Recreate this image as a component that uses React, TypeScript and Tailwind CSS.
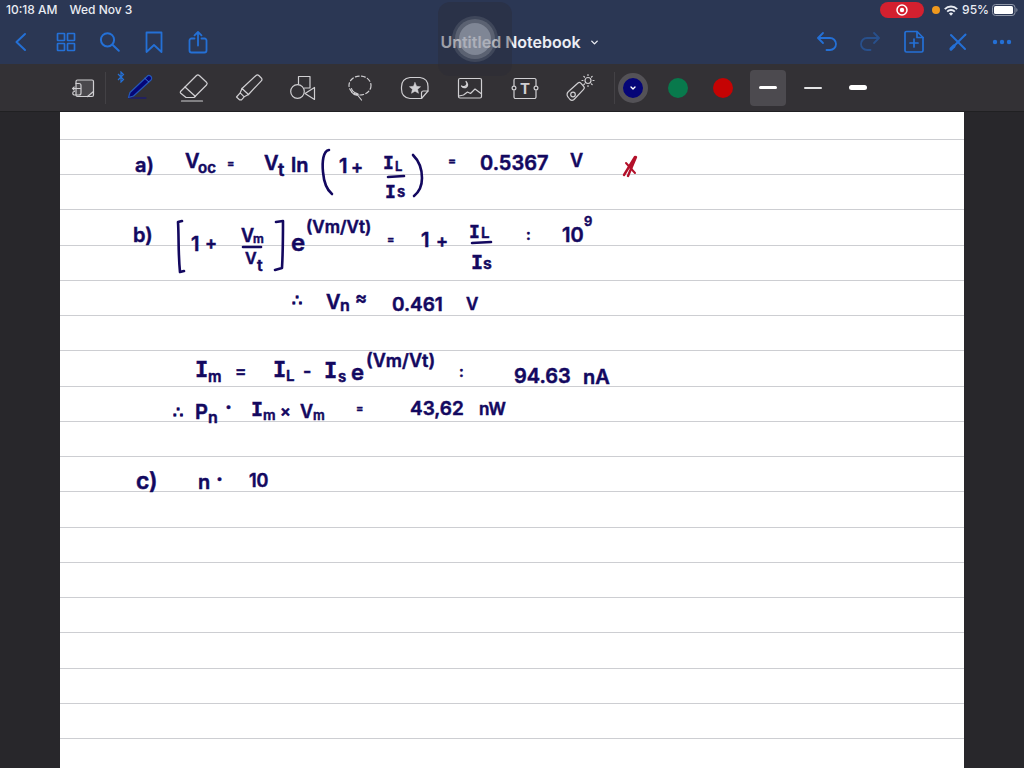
import React from 'react';
import { ChevronDown } from 'lucide-react';

interface IconButtonProps {
  label: string;
  className?: string;
  children: React.ReactNode;
}

const IconButton: React.FC<IconButtonProps> = ({ label, className = 'w-11 h-11', children }) => (
  <button type="button" aria-label={label} className={`flex shrink-0 items-center justify-center ${className}`}>
    {children}
  </button>
);

interface IconProps {
  size?: number;
  width?: number;
  className?: string;
  children: React.ReactNode;
}

const Icon: React.FC<IconProps> = ({ size = 24, width = 1.7, className, children }) => (
  <svg
    width={size}
    height={size}
    viewBox={`0 0 ${size} ${size}`}
    fill="none"
    stroke="currentColor"
    strokeWidth={width}
    strokeLinecap="round"
    strokeLinejoin="round"
    className={className}
  >
    {children}
  </svg>
);

const StatusBar: React.FC = () => (
  <div className="flex h-5 items-center justify-between px-[6px] text-xs font-medium text-[#e9ecf3]">
    <div className="flex gap-3">
      <span>10:18 AM</span>
      <span>Wed Nov 3</span>
    </div>
    <div className="flex items-center">
      <span className="mr-2 flex h-4 w-11 items-center justify-center rounded-full bg-[#d3202f] text-white">
        <svg width="12" height="12" viewBox="0 0 12 12" fill="none" stroke="currentColor" strokeWidth="1.5">
          <circle cx="6" cy="6" r="5" />
          <circle cx="6" cy="6" r="2.2" fill="currentColor" stroke="none" />
        </svg>
      </span>
      <span className="mr-1 h-2 w-2 rounded-full bg-[#f0991e]" />
      <svg width="14" height="11" viewBox="0 0 14 11" fill="none" stroke="currentColor" strokeWidth="1.9" className="mr-1">
        <path d="M.8 4.1a8.8 8.8 0 0 1 12.4 0" />
        <path d="M3.2 6.6a5.4 5.4 0 0 1 7.6 0" />
        <path d="M7 10.8 4.9 8.6a3 3 0 0 1 4.2 0z" fill="currentColor" stroke="none" />
      </svg>
      <span className="mr-[3px]">95%</span>
      <svg width="26" height="12" viewBox="0 0 26 12" fill="none">
        <rect x=".5" y=".5" width="22.5" height="11" rx="3" stroke="#8f97a8" />
        <rect x="2" y="2" width="19" height="8" rx="1.6" fill="#fff" />
        <path d="M24.4 4v4c1.4-.6 1.4-3.4 0-4z" fill="#8f97a8" />
      </svg>
    </div>
  </div>
);

const NavBar: React.FC = () => (
  <nav className="flex h-11 items-center text-[#2470d6]">
    <IconButton label="Back">
      <Icon width={2}><path d="M15 4 6.500 12l8.500 8" /></Icon>
    </IconButton>
    <IconButton label="Thumbnails">
      <Icon>
        <rect x="3.500" y="3.500" width="7" height="7" rx=".5" />
        <rect x="13.500" y="3.500" width="7" height="7" rx=".5" />
        <rect x="3.500" y="13.500" width="7" height="7" rx=".5" />
        <rect x="13.500" y="13.500" width="7" height="7" rx=".5" />
      </Icon>
    </IconButton>
    <IconButton label="Search">
      <Icon width={2}>
        <circle cx="9.500" cy="9.800" r="6.600" />
        <path d="m14.500 14.800 6.300 6" />
      </Icon>
    </IconButton>
    <IconButton label="Bookmark">
      <Icon width={1.8}><path d="M4.500 2.500h15v19.500L12 15l-7.500 7z" /></Icon>
    </IconButton>
    <IconButton label="Share">
      <Icon width={1.8}>
        <path d="M8.500 8.500h-3a2 2 0 0 0-2 2v10a2 2 0 0 0 2 2h13a2 2 0 0 0 2-2v-10a2 2 0 0 0-2-2h-3" />
        <path d="M12 15.500V2M8.500 5.300 12 2l3.500 3.300" />
      </Icon>
    </IconButton>
    <div className="flex flex-1 justify-center pl-4">
      <button type="button" className="flex items-center gap-2 text-base font-semibold text-[#eceef4]">
        Untitled Notebook
        <ChevronDown size={11} strokeWidth={3} />
      </button>
    </div>
    <IconButton label="Undo">
      <Icon width={1.8}>
        <path d="M9 3 4 8l5 5" />
        <path d="M4.500 8H16a5.500 5.500 0 0 1 0 12h-3.500" />
      </Icon>
    </IconButton>
    <IconButton label="Redo">
      <Icon width={1.8} className="text-[#28508c]">
        <path d="m16 3 5 5-5 5" />
        <path d="M20.500 8H9a5.500 5.500 0 0 0 0 12h3.500" />
      </Icon>
    </IconButton>
    <IconButton label="Add page">
      <Icon width={1.7}>
        <path d="M4.500 1.500H15l6 6v13a1.500 1.500 0 0 1-1.500 1.500h-15A1.500 1.500 0 0 1 3 20.500V3a1.500 1.500 0 0 1 1.500-1.500z" />
        <path d="M15 1.500v6h6M12 9v8M8 13h8" />
      </Icon>
    </IconButton>
    <IconButton label="Read-only mode">
      <Icon width={2}>
        <path d="m5 5 14 14" />
        <path d="M19.500 4.500 8 16" />
        <path d="M8 16 5 19" strokeWidth="3.200" />
      </Icon>
    </IconButton>
    <IconButton label="More">
      <Icon>
        <g fill="currentColor" stroke="none">
          <circle cx="5" cy="12" r="2.200" />
          <circle cx="12" cy="12" r="2.200" />
          <circle cx="19" cy="12" r="2.200" />
        </g>
      </Icon>
    </IconButton>
  </nav>
);

const tools = [
  {
    label: 'Pen',
    icon: (
      <>
        <path d="M6 26h17" stroke="#12128a" strokeWidth="1" />
        <path d="m5.500 25.500 1.500-5L24 4.500a2.400 2.400 0 0 1 4 3.500L10.500 24z" fill="#050577" stroke="#2456b8" strokeWidth="1.200" />
        <path d="m22 6.500 3.800 3.500" stroke="#3b78d8" strokeWidth="1" />
      </>
    ),
  },
  {
    label: 'Eraser',
    icon: (
      <>
        <path d="M2.500 19.500 18.500 3.500a2 2 0 0 1 2.800 0l7.200 6.700a2 2 0 0 1 0 2.800L16 25.500H8l-5.500-4.500a1.500 1.500 0 0 1 0-1.500z" />
        <path d="m7 15 10.500 9.500M3.500 29h21" />
      </>
    ),
  },
  {
    label: 'Highlighter',
    icon: (
      <>
        <path d="m9 16.500 14-13a2 2 0 0 1 2.800 0l2.500 2.500a2 2 0 0 1 0 2.800L15.500 22.500" />
        <path d="m9 16.500-1.800 4.300 4 4 4.300-2.300zM7.200 20.800 3.500 25l3 2.800h2l2.700-3M9 16.500l6.500 6" />
      </>
    ),
  },
  {
    label: 'Shapes',
    icon: (
      <>
        <path d="M10.500 12V4.500H22V16h-5.500" />
        <circle cx="9.500" cy="19.500" r="6.800" />
        <path d="m17 21.500 9.500-6v12z" />
      </>
    ),
  },
  {
    label: 'Lasso',
    icon: (
      <>
        <ellipse cx="17" cy="13.500" rx="11" ry="9.500" strokeDasharray="3.800 2.400" />
        <path d="M8.500 16.500c1 5.500 8 4.500 6.500 6.500-2 .5-5-1-6.500-3M14.500 23l4 5" />
      </>
    ),
  },
  {
    label: 'Elements',
    icon: (
      <>
        <path d="M12 5.500h10q8 1 8 9v4.500l-6.500 7.500H12q-8.500-1-8.500-9.500v-2Q3.500 6.500 12 5.500z" />
        <path d="M23.500 26.500v-5.500q0-2 2-2H30" />
        <path d="m17 10.500 1.600 3.800 4 .4-3 2.600.9 4-3.500-2.100-3.500 2.100.9-4-3-2.600 4-.4z" fill="currentColor" strokeWidth=".5" />
      </>
    ),
  },
  {
    label: 'Image',
    icon: (
      <>
        <rect x="5.500" y="6.500" width="23" height="19.500" rx="1.500" />
        <path d="m6 24 4.500-1 4-3 3 1.500 4.500-4.500 6 4.500" />
        <path d="M13 9.500c2.500 3.500-1 6.500-4.500 4.500 3 3.500 9 .5 4.500-4.500z" />
      </>
    ),
  },
  {
    label: 'Text',
    icon: (
      <>
        <path d="M6 13.500V8a1.500 1.500 0 0 1 1.500-1.500h19A1.500 1.500 0 0 1 28 8v5.500M28 18.500v6.500a1.500 1.500 0 0 1-1.500 1.500h-19A1.500 1.500 0 0 1 6 25v-6.500" />
        <circle cx="6" cy="16" r="1.900" />
        <circle cx="28" cy="16" r="1.900" />
        <text x="17" y="21.500" textAnchor="middle" fill="currentColor" stroke="none" fontSize="15" fontWeight="700">T</text>
      </>
    ),
  },
  {
    label: 'Laser pointer',
    icon: (
      <>
        <path d="M5.500 19.500 15 11a2 2 0 0 1 2.800.2l3 3.300a2 2 0 0 1-.2 2.800L11 27.500a3 3 0 0 1-4 0l-2-2.500a3.800 3.800 0 0 1 .5-5.500z" />
        <circle cx="10" cy="22.500" r="2.300" />
        <circle cx="25" cy="8.500" r="3" />
        <path d="M25 2.500v1M25 13.500v1M19 8.500h1M30 8.500h1M20.800 4.300l.7.700M28.500 12l.7.700M29.200 4.300l-.7.700M21.500 12l-.7.700" />
      </>
    ),
  },
];

const Toolbar: React.FC = () => (
  <div className="flex h-12 items-center border-b border-[#202022] bg-[#333135] pl-[61px] text-[#d0cfd2]">
    <IconButton label="Zoom window" className="h-11 w-11 pt-px">
      <Icon width={1.2}>
        <rect x="5" y="4" width="17.500" height="16.500" rx="1.500" fill="#4a484c" />
        <path d="M5 7.500h3a2 2 0 0 1 2 2v7.500a2 2 0 0 1-2 2H3M1.500 12.500h8M3.500 11a1.500 1.500 0 1 0 0 3M3.500 15.500a1.500 1.500 0 1 0 0 3.500M16.500 20.500l6-5" />
      </Icon>
    </IconButton>
    <span className="mr-[6px] h-8 w-px bg-[#434145]" />
    {tools.map((tool) => (
      <IconButton key={tool.label} label={tool.label} className="relative h-11 w-[55px] pt-[2px]">
        <Icon size={34} width={1.2}>{tool.icon}</Icon>
        {tool.label === 'Pen' && (
          <svg width="8" height="12" viewBox="0 0 8 12" fill="none" stroke="#2470d6" strokeWidth="1.200" className="absolute left-[5px] top-[5px]">
            <path d="m1 3 5.500 5.500L4 11V1l2.500 2.500L1 9" />
          </svg>
        )}
      </IconButton>
    ))}
    <span className="ml-[7px] h-8 w-px bg-[#434145]" />
    <div className="flex items-center gap-[9px]">
      <IconButton label="Navy ink" className="size-9">
        <span className="flex size-[30px] items-center justify-center rounded-full border-[5px] border-[#545257] bg-[#050577] text-white">
          <ChevronDown size={8} strokeWidth={4} />
        </span>
      </IconButton>
      <IconButton label="Green ink" className="size-9">
        <span className="size-5 rounded-full bg-[#08794c]" />
      </IconButton>
      <IconButton label="Red ink" className="size-9">
        <span className="size-5 rounded-full bg-[#c50303]" />
      </IconButton>
      <IconButton label="Medium stroke" className="size-9 rounded bg-[#4c4a4f]">
        <span className="h-[3px] w-[18px] rounded-full bg-white" />
      </IconButton>
      <IconButton label="Thin stroke" className="size-9">
        <span className="h-[2px] w-[18px] rounded-full bg-[#e4e4e6]" />
      </IconButton>
      <IconButton label="Thick stroke" className="size-9">
        <span className="h-[5px] w-[18px] rounded-full bg-white" />
      </IconButton>
    </div>
  </div>
);

// Floating assistive-touch puck.
const TouchPuck: React.FC = () => (
  <div className="pointer-events-none absolute left-[438px] top-[2px] flex size-[74px] items-center justify-center rounded-xl bg-[#2b2b36]/40">
    <span className="flex size-[46px] items-center justify-center rounded-full bg-white/10">
      <span className="flex size-10 items-center justify-center rounded-full bg-white/15">
        <span className="size-8 rounded-full bg-[#a4a9b8]/50" />
      </span>
    </span>
  </div>
);

// x and y are the left end of the baseline on the sheet.
interface Ink {
  t: string;
  x: number;
  y: number;
  s: number;
  serif?: boolean;
}

const ink: Ink[] = [
  { t: 'a)', x: 75, y: 60, s: 20 },
  { t: 'V', x: 125, y: 56, s: 20 },
  { t: 'oc', x: 138, y: 61, s: 15 },
  { t: '=', x: 167, y: 55, s: 11 },
  { t: 'V', x: 204, y: 58, s: 20 },
  { t: 't', x: 218, y: 64, s: 18 },
  { t: 'ln', x: 231, y: 60, s: 20 },
  { t: '1', x: 279, y: 61, s: 20 },
  { t: '+', x: 291, y: 61, s: 18 },
  { t: 'I', x: 323, y: 57, s: 18, serif: true },
  { t: 'L', x: 335, y: 59, s: 13 },
  { t: 'I', x: 325, y: 86, s: 18, serif: true },
  { t: 's', x: 337, y: 85, s: 15 },
  { t: '=', x: 388, y: 53, s: 12 },
  { t: '0.5367', x: 420, y: 58, s: 20 },
  { t: 'V', x: 510, y: 55, s: 18 },
  { t: 'b)', x: 73, y: 130, s: 20 },
  { t: '1', x: 131, y: 139, s: 20 },
  { t: '+', x: 145, y: 137, s: 18 },
  { t: 'V', x: 181, y: 130, s: 18 },
  { t: 'm', x: 193, y: 131, s: 12 },
  { t: 'V', x: 185, y: 152, s: 16 },
  { t: 't', x: 197, y: 159, s: 16 },
  { t: 'e', x: 231, y: 139, s: 24 },
  { t: '(Vm/Vt)', x: 246, y: 121, s: 17 },
  { t: '=', x: 327, y: 131, s: 11 },
  { t: '1', x: 361, y: 135, s: 20 },
  { t: '+', x: 376, y: 135, s: 18 },
  { t: 'I', x: 409, y: 126, s: 18, serif: true },
  { t: 'L', x: 421, y: 126, s: 15 },
  { t: 'I', x: 411, y: 157, s: 20, serif: true },
  { t: 's', x: 423, y: 157, s: 16 },
  { t: ':', x: 466, y: 128, s: 15 },
  { t: '10', x: 502, y: 130, s: 20 },
  { t: '9', x: 524, y: 114, s: 13 },
  { t: '∴', x: 232, y: 194, s: 16 },
  { t: 'V', x: 266, y: 197, s: 20 },
  { t: 'n', x: 280, y: 199, s: 16 },
  { t: '≈', x: 295, y: 192, s: 18 },
  { t: '0.461', x: 332, y: 199, s: 19 },
  { t: 'V', x: 406, y: 198, s: 17 },
  { t: 'I', x: 135, y: 265, s: 22, serif: true },
  { t: 'm', x: 148, y: 270, s: 15 },
  { t: '=', x: 175, y: 265, s: 17 },
  { t: 'I', x: 213, y: 265, s: 22, serif: true },
  { t: 'L', x: 226, y: 269, s: 15 },
  { t: '-', x: 243, y: 265, s: 18 },
  { t: 'I', x: 264, y: 266, s: 22, serif: true },
  { t: 's', x: 278, y: 270, s: 15 },
  { t: 'e', x: 291, y: 268, s: 22 },
  { t: '(Vm/Vt)', x: 306, y: 255, s: 18 },
  { t: ':', x: 399, y: 265, s: 15 },
  { t: '94.63', x: 454, y: 271, s: 20 },
  { t: 'nA', x: 523, y: 272, s: 20 },
  { t: '∴', x: 113, y: 306, s: 16 },
  { t: 'P', x: 135, y: 307, s: 20 },
  { t: 'n', x: 148, y: 311, s: 16 },
  { t: '·', x: 165, y: 303, s: 22 },
  { t: 'I', x: 191, y: 304, s: 20, serif: true },
  { t: 'm', x: 203, y: 308, s: 14 },
  { t: '×', x: 220, y: 305, s: 16 },
  { t: 'V', x: 240, y: 306, s: 18 },
  { t: 'm', x: 253, y: 308, s: 13 },
  { t: '=', x: 296, y: 300, s: 11 },
  { t: '43,62', x: 350, y: 303, s: 19 },
  { t: 'nW', x: 419, y: 303, s: 17 },
  { t: 'c)', x: 76, y: 377, s: 23 },
  { t: 'n', x: 138, y: 377, s: 20 },
  { t: '·', x: 156, y: 375, s: 22 },
  { t: '10', x: 189, y: 375, s: 18 },
];

const ruleCount = 18;
const ruleGap = 35.24;

const Sheet: React.FC = () => (
  <main className="mx-[60px] flex-1 overflow-hidden bg-white">
    <svg width="100%" height="656" className="block">
      {Array.from({ length: ruleCount }, (_, i) => {
        const y = 27 + Math.round(i * ruleGap);
        return <rect key={i} x="0" y={y} width="100%" height="1" fill="#cdced2" />;
      })}
      <g fill="#13085f" stroke="#13085f" strokeWidth=".5" fontWeight="600">
        {ink.map((word, i) => (
          <text
            key={i}
            x={word.x}
            y={word.y}
            fontSize={word.s}
            fontFamily={word.serif ? '"DejaVu Sans Mono", monospace' : 'Inter, sans-serif'}
          >
            {word.t}
          </text>
        ))}
      </g>
      <g fill="none" stroke="#13085f" strokeWidth="2.600" strokeLinecap="round" strokeLinejoin="round">
        <path d="M269 38c-6 1-7 12-6 22 1 12 4 18 9 22" />
        <path d="M353 43c6 6 9 15 9 23 0 9-3 14-8 18" />
        <path d="M328 65l16-1" />
        <path d="M122 109l-4 1c1 15 0 30 2 50l4-1" />
        <path d="M183 135l18 0" />
        <path d="M216 110l7-1c0 15 0 30-1 47l-7 2" />
        <path d="M412 131l19-1" />
      </g>
      <g fill="none" stroke="#b3102a" strokeWidth="2.400" strokeLinecap="round" strokeLinejoin="round">
        <path d="M575 45 564 63M576 45l-8 19" />
        <path d="M566 51l9 10" strokeWidth="2" />
      </g>
    </svg>
  </main>
);

const App: React.FC = () => (
  <div className="flex min-h-screen flex-col bg-[#28272b] font-['Inter',sans-serif]">
    <header className="relative">
      <div className="bg-[#2b3754]">
        <StatusBar />
        <NavBar />
      </div>
      <Toolbar />
      <TouchPuck />
    </header>
    <Sheet />
  </div>
);

export default App;
